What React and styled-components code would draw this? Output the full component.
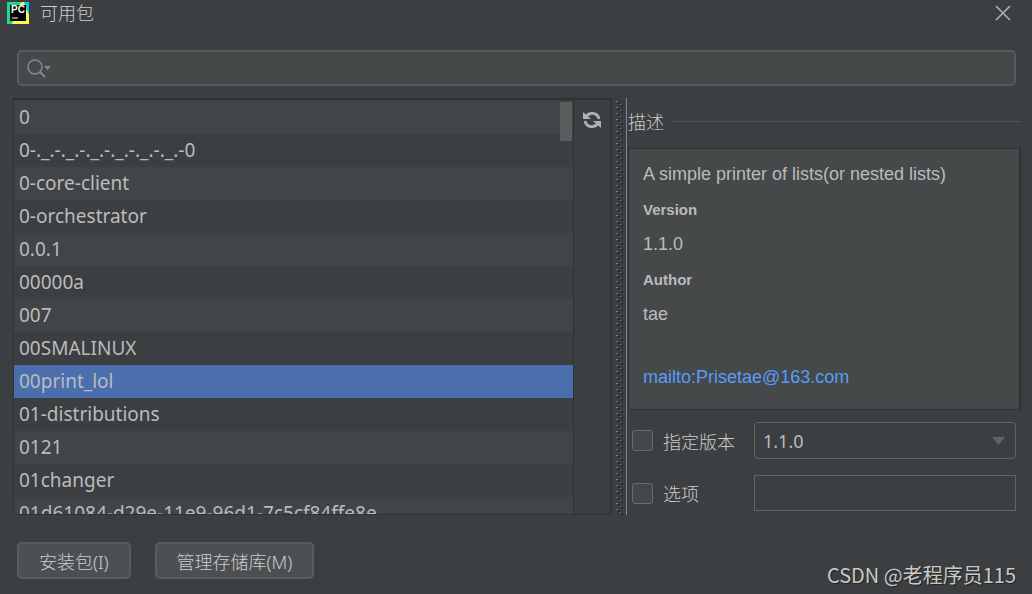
import React, { useState } from "react";
import styled, { createGlobalStyle } from "styled-components";

const GlobalStyle = createGlobalStyle`
  * {
    box-sizing: border-box;
  }

  body {
    margin: 0;
    background: #3c3f41;
    color: #bbbbbb;
    font-family: "Noto Sans", "Noto Sans CJK SC", sans-serif;
    font-size: 18px;
  }

  button, input, select {
    font: inherit;
    color: inherit;
  }
`;

const Dialog = styled.div`
  display: flex;
  flex-direction: column;
  height: 100vh;
  overflow: hidden;
`;

const TitleBar = styled.header`
  display: flex;
  align-items: center;
  gap: 11px;
  height: 26px;
  padding: 0 21px 0 7px;
`;

const Title = styled.h1`
  flex: 1;
  margin: 0;
  color: #cccccc;
  font-size: 18px;
  font-weight: 300;
  line-height: 28px;
`;

const IconButton = styled.button`
  display: flex;
  padding: 0;
  border: 0;
  background: none;
  color: #afb1b3;
  cursor: pointer;
`;

const SearchBox = styled.label`
  display: flex;
  align-items: center;
  gap: 8px;
  height: 36px;
  margin: 24px 16px 12px 17px;
  padding: 0 8px;
  border: 2px solid #595c5d;
  border-radius: 5px;
  background: #45494a;
`;

const SearchInput = styled.input`
  flex: 1;
  min-width: 0;
  border: 0;
  outline: 0;
  background: none;
`;

const Content = styled.main`
  display: flex;
  flex: 1;
  min-height: 0;
  padding: 0 11px 0 13px;
`;

const PackagePane = styled.section`
  display: flex;
  flex: 596 1 0;
  min-width: 0;
  border: 1px solid #323232;
  border-top-width: 2px;
  border-right-width: 2px;
`;

const ListArea = styled.div`
  position: relative;
  flex: 1;
  min-width: 0;
  padding-top: 1px;
  overflow: hidden;
  border-right: 1px solid #323232;
`;

const PackageList = styled.ul`
  margin: 0;
  padding: 0;
  list-style: none;
`;

const PackageRow = styled.li`
  height: 33px;
  padding-left: 5px;
  font-size: 19px;
  line-height: 32px;
  white-space: nowrap;
  cursor: default;
  background: ${({ $selected }) => ($selected ? "#4b6eaf" : "#3c3f41")};

  &:nth-child(odd) {
    background: ${({ $selected }) => ($selected ? "#4b6eaf" : "#414547")};
  }
`;

const ScrollThumb = styled.div`
  position: absolute;
  top: 2px;
  right: 1px;
  width: 12px;
  height: 39px;
  background: #5b5e5f;
`;

const Toolbar = styled.div`
  display: flex;
  justify-content: center;
  align-items: flex-start;
  width: 36px;
  padding-top: 11px;
`;

const Splitter = styled.div`
  display: flex;
  justify-content: center;
  width: 15px;
  padding: 2px 1px 0 3px;
  border-right: 1px solid #7a8a9e;
`;

const DetailPane = styled.section`
  display: flex;
  flex-direction: column;
  flex: 394 1 0;
  min-width: 0;
`;

const Legend = styled.h2`
  display: flex;
  align-items: center;
  gap: 9px;
  height: 46px;
  margin: 0 0 4px;
  padding-left: 1px;
  color: #cccccc;
  font-size: 18px;
  font-weight: 300;

  &::after {
    content: "";
    flex: 1;
    height: 1px;
    background: #515355;
  }
`;

const Description = styled.article`
  flex: 1;
  min-height: 0;
  margin-left: 1px;
  padding: 8px 14px;
  border: 1px solid #323232;
  border-right-width: 2px;
  background: #45494a;
  font-family: "Liberation Sans", Arial, sans-serif;
  font-size: 18px;
  line-height: 35px;

  h3, p {
    margin: 0;
  }

  h3 {
    font-size: 15px;
  }
`;

const Email = styled.p`
  padding-top: 28px;

  a {
    color: #589df6;
    text-decoration: none;
  }
`;

const Options = styled.div`
  display: grid;
  grid-template-columns: 122px 1fr;
  row-gap: 16px;
  padding: 12px 5px 4px 5px;
`;

const CheckLabel = styled.label`
  display: flex;
  align-items: center;
  gap: 10px;
  color: #cccccc;
  font-weight: 300;
`;

const CheckBox = styled.input`
  appearance: none;
  width: 21px;
  height: 21px;
  margin: 0;
  border: 1px solid #6b6b6b;
  border-radius: 3px;
  background: #43494a;

  &:checked {
    background: #4b6eaf;
  }
`;

const SelectWrapper = styled.div`
  position: relative;

  svg {
    position: absolute;
    top: 15px;
    right: 11px;
    pointer-events: none;
  }
`;

const VersionSelect = styled.select`
  appearance: none;
  display: block;
  width: 100%;
  height: 37px;
  padding: 0 8px;
  border: 1px solid #646464;
  border-radius: 4px;
  background: #3c3f41;
`;

const OptionInput = styled.input`
  width: 100%;
  min-width: 0;
  height: 36px;
  padding: 0 8px;
  border: 1px solid #646464;
  background: #3c3f41;
`;

const Footer = styled.footer`
  display: flex;
  align-items: flex-start;
  gap: 24px;
  height: 79px;
  padding: 27px 16px 0 17px;
`;

const PushButton = styled.button`
  height: 37px;
  padding: 0 20px;
  border: 2px solid #5a5d5e;
  border-radius: 5px;
  background: #4c5052;
  color: #cccccc;
  font-weight: 300;
  white-space: nowrap;
`;

const Credit = styled.span`
  align-self: flex-end;
  margin-left: auto;
  padding-bottom: 5px;
  color: #c8c9c9;
  font-family: "Noto Sans CJK SC", sans-serif;
  font-size: 20px;
  line-height: 28px;
  text-shadow: 1px 1px 1px #222222;
`;

const PACKAGES = [
  "0",
  "0-._.-._.-._.-._.-._.-._.-0",
  "0-core-client",
  "0-orchestrator",
  "0.0.1",
  "00000a",
  "007",
  "00SMALINUX",
  "00print_lol",
  "01-distributions",
  "0121",
  "01changer",
  "01d61084-d29e-11e9-96d1-7c5cf84ffe8e",
];

const AppIcon = () => (
  <svg width="22" height="22" viewBox="0 0 22 22" aria-hidden="true">
    <rect width="22" height="22" fill="#21d789" />
    <path d="M17 0h5v14l-4-4z" fill="#07c3f2" />
    <path d="M12 3l3-3h2l2 6 3 7v9H5v-4z" fill="#fcf84a" />
    <path d="M0 0h12L5 22H0z" fill="#21d789" />
    <rect x="3" y="3" width="16" height="16" fill="#000000" />
    <text x="4" y="11" fill="#ffffff" fontFamily="Liberation Sans" fontWeight="700" fontSize="10">
      PC
    </text>
    <path d="M5 16h6" stroke="#ffffff" />
  </svg>
);

const CloseIcon = () => (
  <svg width="16" height="16" viewBox="0 0 16 16" fill="none" aria-hidden="true">
    <path d="M1 1l14 14M15 1L1 15" stroke="currentColor" strokeWidth="1.6" />
  </svg>
);

const SearchIcon = () => (
  <svg width="24" height="20" viewBox="0 0 24 20" fill="none" aria-hidden="true">
    <circle cx="8" cy="9" r="7" stroke="#7f8b91" strokeWidth="1.6" />
    <path d="M13 14l5 5" stroke="#7f8b91" strokeWidth="2" />
    <path d="M17 8h7l-3.500 4z" fill="#7f8b91" />
  </svg>
);

const RefreshIcon = () => (
  <svg width="18" height="18" viewBox="0 0 18 18" fill="none" aria-hidden="true">
    <path d="M3 6a7 7 0 0 1 13 2M15 12a7 7 0 0 1-13-2" stroke="currentColor" strokeWidth="2.800" />
    <path d="M0 1v7h8zM18 17v-7h-8z" fill="currentColor" />
  </svg>
);

const Grip = () => (
  <svg width="8" height="100%" aria-hidden="true">
    <defs>
      <pattern id="grip" width="8" height="6" patternUnits="userSpaceOnUse">
        <path d="M0 1.500h2M4 4.500h1" stroke="#777a7c" />
        <path d="M2 2h2v2H2zM5 5h2v1H5zM5 0h2v1H5z" fill="#292b2c" />
      </pattern>
    </defs>
    <rect width="8" height="100%" fill="url(#grip)" />
  </svg>
);

function App() {
  const [selected, setSelected] = useState("00print_lol");

  return (
    <>
      <GlobalStyle />
      <Dialog>
        <TitleBar>
          <AppIcon />
          <Title>可用包</Title>
          <IconButton aria-label="关闭">
            <CloseIcon />
          </IconButton>
        </TitleBar>

        <SearchBox>
          <SearchIcon />
          <SearchInput type="text" aria-label="搜索" />
        </SearchBox>

        <Content>
          <PackagePane>
            <ListArea>
              <PackageList>
                {PACKAGES.map((name) => (
                  <PackageRow
                    key={name}
                    $selected={name === selected}
                    onClick={() => setSelected(name)}
                  >
                    {name}
                  </PackageRow>
                ))}
              </PackageList>
              <ScrollThumb />
            </ListArea>
            <Toolbar>
              <IconButton aria-label="刷新">
                <RefreshIcon />
              </IconButton>
            </Toolbar>
          </PackagePane>

          <Splitter>
            <Grip />
          </Splitter>

          <DetailPane>
            <Legend>描述</Legend>
            <Description>
              <p>A simple printer of lists(or nested lists)</p>
              <h3>Version</h3>
              <p>1.1.0</p>
              <h3>Author</h3>
              <p>tae</p>
              <Email>
                <a href="mailto:Prisetae@163.com">mailto:Prisetae@163.com</a>
              </Email>
            </Description>
            <Options>
              <CheckLabel>
                <CheckBox type="checkbox" />
                指定版本
              </CheckLabel>
              <SelectWrapper>
                <VersionSelect aria-label="指定版本">
                  <option>1.1.0</option>
                </VersionSelect>
                <svg width="13" height="8" viewBox="0 0 13 8" aria-hidden="true">
                  <path d="M0 0h13L6.500 8z" fill="#606263" />
                </svg>
              </SelectWrapper>
              <CheckLabel>
                <CheckBox type="checkbox" />
                选项
              </CheckLabel>
              <OptionInput type="text" aria-label="选项" />
            </Options>
          </DetailPane>
        </Content>

        <Footer>
          <PushButton>安装包(I)</PushButton>
          <PushButton>管理存储库(M)</PushButton>
          <Credit>CSDN @老程序员115</Credit>
        </Footer>
      </Dialog>
    </>
  );
}

export default App;
